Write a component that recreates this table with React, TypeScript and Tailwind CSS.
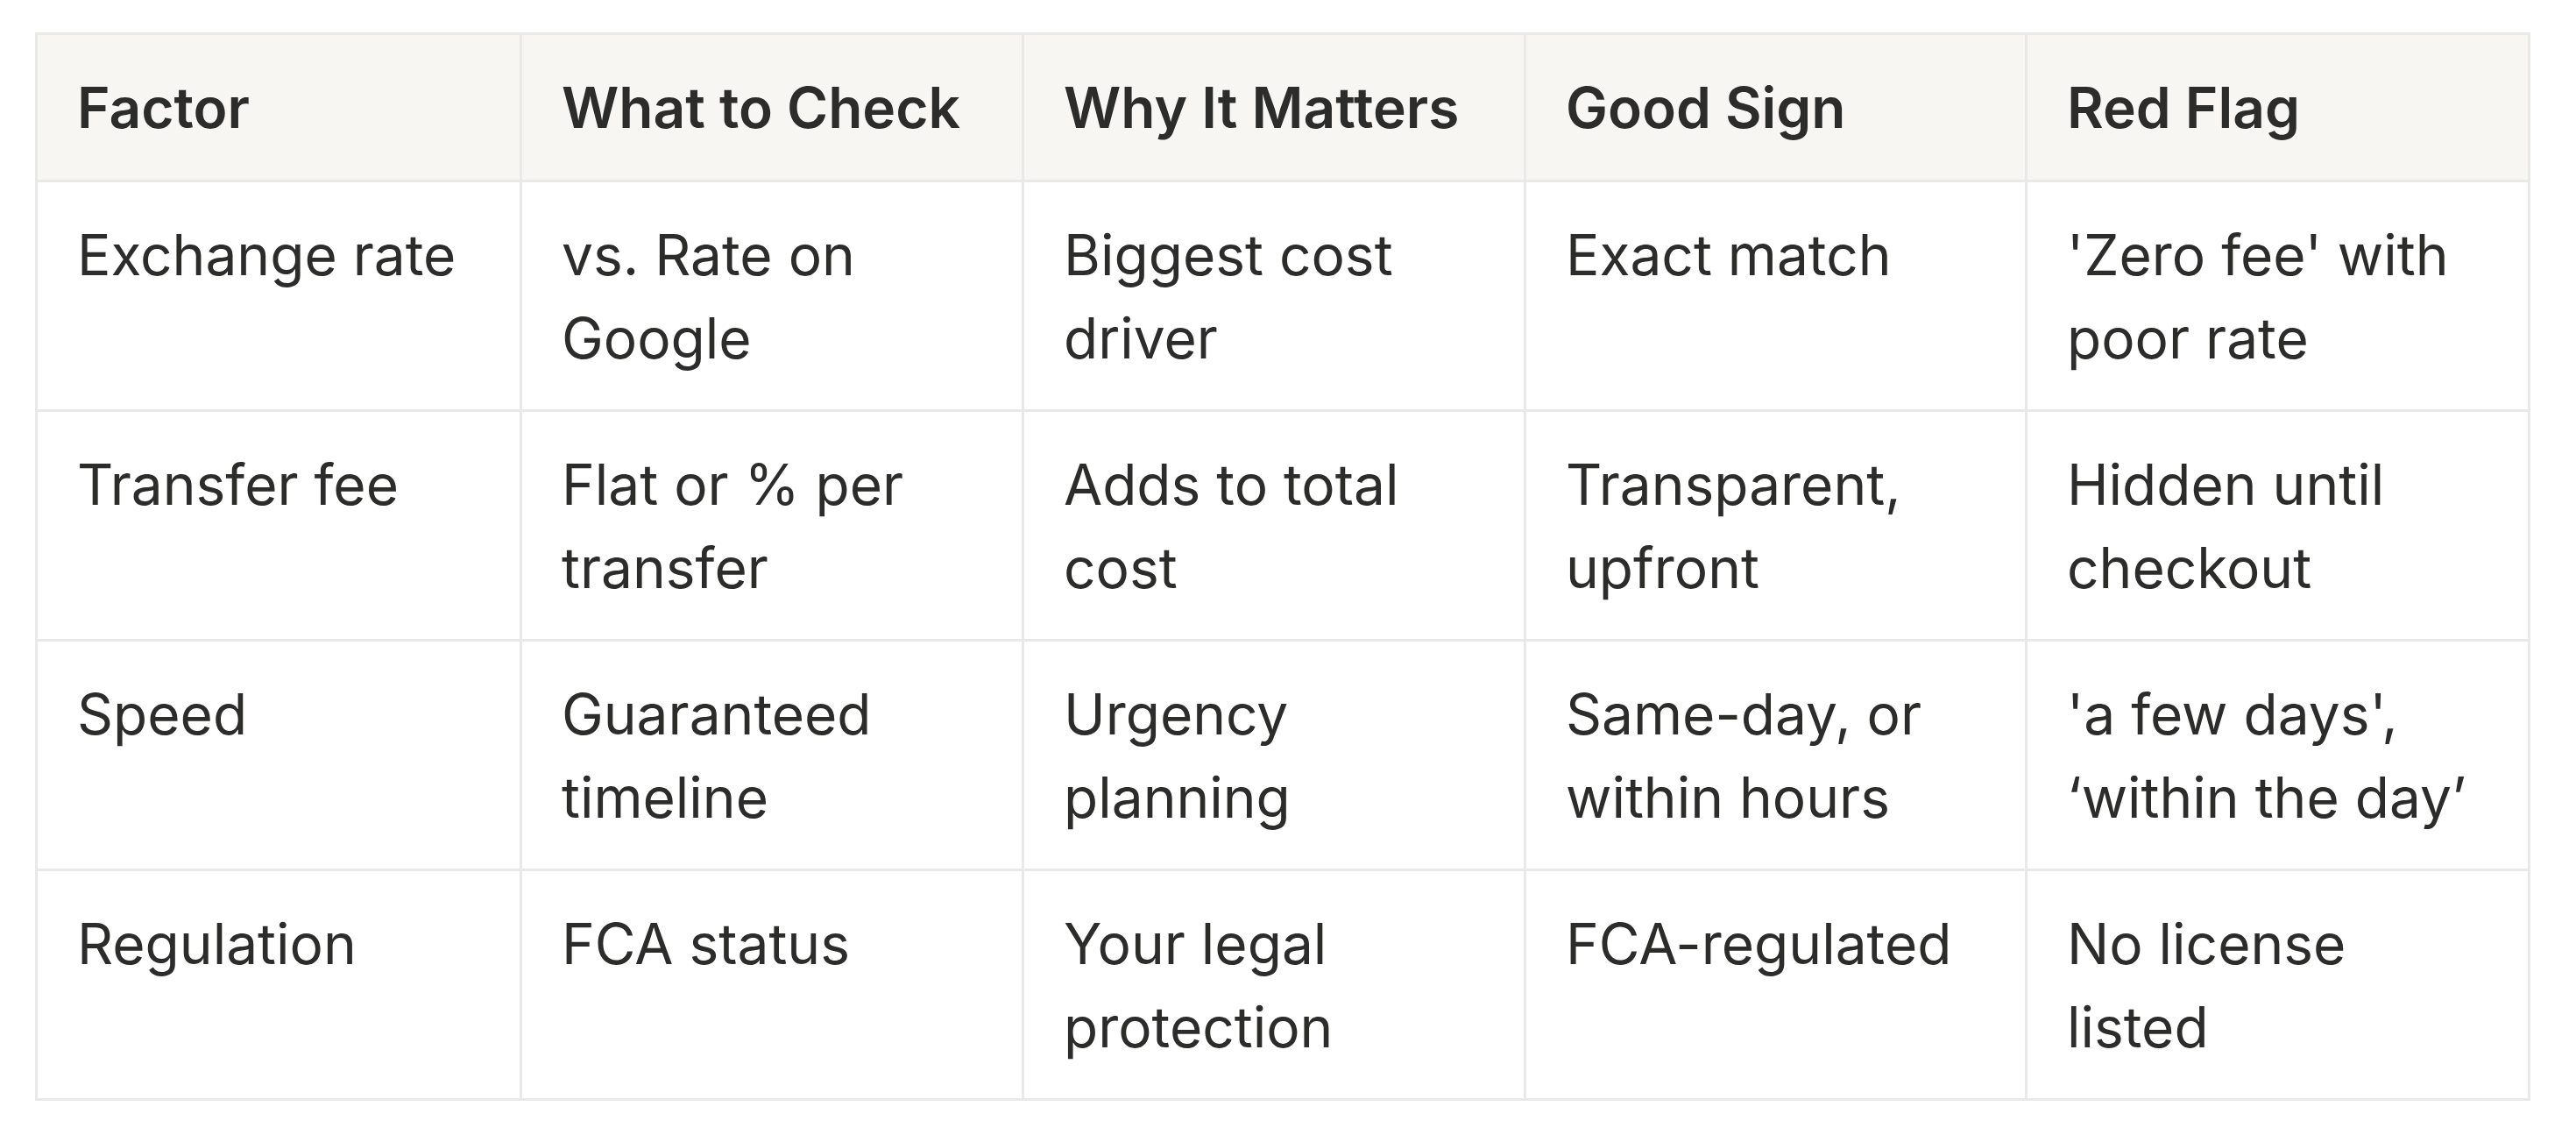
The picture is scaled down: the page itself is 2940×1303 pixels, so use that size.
const HEAD = ["Factor", "What to Check", "Why It Matters", "Good Sign", "Red Flag"];

const ROWS = [
  ["Exchange rate", "vs. Rate on Google", "Biggest cost driver", "Exact match", "'Zero fee' with poor rate"],
  ["Transfer fee", "Flat or % per transfer", "Adds to total cost", "Transparent, upfront", "Hidden until checkout"],
  ["Speed", "Guaranteed timeline", "Urgency planning", "Same-day, or within hours", "'a few days', \u2018within the day\u2019"],
  ["Regulation", "FCA status", "Your legal protection", "FCA-regulated", "No license listed"],
];

export default function App() {
  return (
    <div className="min-h-screen bg-white pt-[37px] pl-[40px] font-['Inter','Noto_Sans',sans-serif] text-[#2c2c2b]">
      <table className="table-fixed border-collapse border-[3px] border-[#e9e9e7] text-[64px] leading-[95px]">
        <colgroup>
          <col className="w-[553px]" />
          <col className="w-[573px]" />
          <col className="w-[573px]" />
          <col className="w-[572px]" />
          <col className="w-[574px]" />
        </colgroup>
        <thead>
          <tr className="bg-[#f7f6f3]">
            {HEAD.map((h) => (
              <th
                key={h}
                className="border-[3px] border-[#e9e9e7] px-[45px] py-[35px] text-left align-top font-semibold"
              >
                {h}
              </th>
            ))}
          </tr>
        </thead>
        <tbody>
          {ROWS.map((row) => (
            <tr key={row[0]}>
              {row.map((cell, i) => (
                <td
                  key={i}
                  className="border-[3px] border-[#e9e9e7] px-[45px] pt-[35px] pb-[34px] align-top font-normal"
                >
                  {cell}
                </td>
              ))}
            </tr>
          ))}
        </tbody>
      </table>
    </div>
  );
}
